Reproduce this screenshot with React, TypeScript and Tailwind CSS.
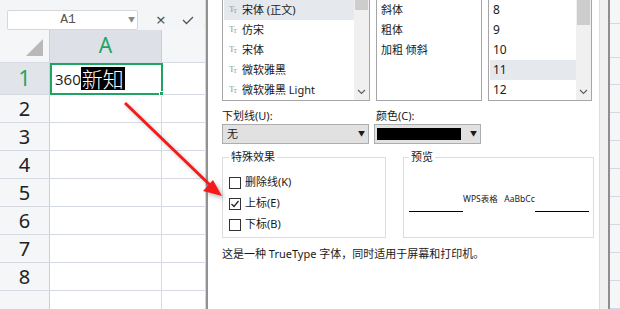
const grid = "border-[#d6dbe3]";

function Chevron() {
  return (
    <svg width="9" height="6" viewBox="0 0 9 6" className="text-[#606060]">
      <polyline points="1,1 4.5,4.5 8,1" fill="none" stroke="currentColor" strokeWidth="1.2" />
    </svg>
  );
}

function TTIcon() {
  return (
    <span className="relative w-[8px] h-[10px] font-['Liberation_Serif',serif] text-[#9a9a9a] leading-none">
      <span className="absolute left-0 top-0 text-[9px]">T</span>
      <span className="absolute left-[4px] top-[3px] text-[7px]">T</span>
    </span>
  );
}

function Scrollbar({ thumb }: { thumb: number }) {
  return (
    <div className="w-[15px] bg-[#f0f0f0] flex flex-col">
      <div className="bg-[#cdcdcd] mx-[1px]" style={{ height: thumb }} />
      <div className="flex-1" />
      <div className="h-[16px] flex items-center justify-center">
        <Chevron />
      </div>
    </div>
  );
}

function CheckRow({ label, checked }: { label: string; checked?: boolean }) {
  return (
    <div className="h-[21px] flex items-center gap-[4px]">
      <div className="w-[12px] h-[12px] border border-[#333] bg-white flex items-center justify-center">
        {checked && (
          <svg width="10" height="10" viewBox="0 0 10 10">
            <polyline points="1.5,5 4,7.5 8.5,2" fill="none" stroke="#222" strokeWidth="1.2" />
          </svg>
        )}
      </div>
      <span>{label}</span>
    </div>
  );
}

export default function App() {
  const fonts = ["宋体 (正文)", "仿宋", "宋体", "微软雅黑", "微软雅黑 Light"];
  const styles = ["斜体", "粗体", "加粗 倾斜"];
  const sizes = ["8", "9", "10", "11", "12"];
  const rows = [2, 3, 4, 5, 6, 7, 8, 9];

  return (
    <div className="relative w-[620px] h-[309px] overflow-hidden flex bg-white font-['Noto_Sans','Noto_Sans_CJK_SC',sans-serif] text-[#1a1a1a]">
      {/* spreadsheet */}
      <div className="w-[205px] flex flex-col shrink-0 overflow-hidden">
        <div className="h-[38px] bg-[#f4f5f6] flex items-start pt-[10px] pl-[7px] gap-[18px] text-[#555]">
          <div className="w-[131px] shrink-0 h-[20px] bg-white border border-[#d7d7d7] rounded-[2px] flex items-center relative">
            <span className="flex-1 text-center font-['Liberation_Mono',monospace] text-[13px]">A1</span>
            <span className="text-[7px] text-[#888] mr-[2px]">▼</span>
          </div>
          <span className="shrink-0 text-[17px] leading-[20px]">×</span>
          <svg width="12" height="20" viewBox="0 0 12 20" className="shrink-0 -ml-[2px]">
            <polyline points="1,10 4.5,13.5 11,7" fill="none" stroke="#555" strokeWidth="1.3" />
          </svg>
          <span className="shrink-0 -ml-[7px] italic font-['Liberation_Serif',serif] text-[14px] leading-[20px] text-[#888]">f</span>
        </div>
        <div className={`h-[33px] flex border-b ${grid}`}>
          <div className="w-[50px] bg-[#f5f6f7] border-r border-[#c9ced6] relative">
            <svg width="50" height="33" className="absolute inset-0">
              <polygon points="43,9 43,26 26,26" fill="#b9b9b9" />
            </svg>
          </div>
          <div className="w-[112px] bg-[#dde1e7] border-r border-[#c9ced6] flex items-center justify-center text-[21px] text-[#1fa463]">
            A
          </div>
          <div className="flex-1 bg-[#f5f6f7]" />
        </div>
        <div className={`h-[34px] flex border-b ${grid}`}>
          <div className="w-[50px] bg-[#e1e4e9] border-r border-[#c9ced6] flex items-center justify-center text-[21px] text-[#1fa463]">
            1
          </div>
          <div className="w-[113px] -mr-[1px] -mb-[1px] border-2 border-[#1fa463] flex items-center pl-[3px] relative z-10">
            <span className="text-[15px] font-['Open_Sans',sans-serif]">360</span>
            <span className="bg-black text-white text-[21px] leading-[22px] h-[23px] px-[1px] font-['Noto_Sans_CJK_SC',sans-serif] font-light">新知</span>
            <div className="absolute -right-[3px] -bottom-[3px] w-[5px] h-[5px] bg-[#1fa463] border border-white" />
          </div>
          <div className="flex-1" />
        </div>
        {rows.map(r => (
          <div key={r} className={`h-[28px] shrink-0 flex border-b ${grid}`}>
            <div className="w-[50px] bg-[#f5f6f7] border-r border-[#c9ced6] flex items-center justify-center text-[20px] text-[#222]">
              {r < 9 ? r : ""}
            </div>
            <div className={`w-[112px] border-r ${grid}`} />
            <div className="flex-1" />
          </div>
        ))}
      </div>
      <div className="w-px bg-[#d8d8d8]" />
      <div className="w-[2px] bg-[#929292]" />

      {/* dialog */}
      <div className="w-[391px] shrink-0 flex flex-col pl-[14px] text-[11px]">
        <div className="h-[101px] flex gap-[6px]">
          <div className="w-[148px] border-x border-b border-[#a6a6a6] flex">
            <div className="flex-1 flex flex-col pl-[1px]">
              {fonts.map((f, i) => (
                <div key={f} className={`h-[20px] flex items-center pl-[5px] gap-[5px] ${i === 0 ? "bg-[#e5e8ed]" : ""}`}>
                  <TTIcon />
                  <span>{f}</span>
                </div>
              ))}
            </div>
            <Scrollbar thumb={10} />
          </div>
          <div className="w-[106px] border-x border-b border-[#a6a6a6] flex flex-col pl-[4px]">
            {styles.map(s => (
              <div key={s} className="h-[20px] flex items-center">{s}</div>
            ))}
          </div>
          <div className="w-[104px] border-x border-b border-[#a6a6a6] flex">
            <div className="flex-1 flex flex-col pl-[1px]">
              {sizes.map(s => (
                <div key={s} className={`h-[20px] flex items-center pl-[3px] text-[12px] ${s === "11" ? "bg-[#e5e8ed]" : ""}`}>
                  {s}
                </div>
              ))}
            </div>
            <Scrollbar thumb={25} />
          </div>
        </div>

        <div className="flex gap-[6px] pt-[7px] leading-[16px]">
          <div className="w-[148px]">下划线(U):</div>
          <div className="w-[106px]">颜色(C):</div>
        </div>
        <div className="flex gap-[6px] h-[20px]">
          <div className="w-[147px] bg-[#e1e1e1] border border-[#adadad] flex items-center pl-[4px] pr-[3px]">
            <span className="flex-1">无</span>
            <span className="text-[7px]">▼</span>
          </div>
          <div className="w-[107px] -ml-[1px] bg-[#e1e1e1] border border-[#adadad] flex items-center pl-[2px] pr-[3px]">
            <div className="w-[84px] h-[12px] bg-black" />
            <span className="flex-1 text-right text-[7px]">▼</span>
          </div>
        </div>

        <div className="flex gap-[17px] mt-[13px] h-[81px]">
          <div className="w-[164px] border border-[#dcdcdc] relative pl-[6px] pt-[14px]">
            <span className="absolute left-[6px] -top-[8px] bg-white px-[2px] leading-[14px]">特殊效果</span>
            <CheckRow label="删除线(K)" />
            <CheckRow label="上标(E)" checked />
            <CheckRow label="下标(B)" />
          </div>
          <div className="w-[191px] border border-[#dcdcdc] relative pl-[5px] pt-[35px]">
            <span className="absolute left-[5px] -top-[8px] bg-white px-[2px] leading-[14px]">预览</span>
            <div className="flex items-end">
              <div className="w-[54px] h-px bg-black" />
              <span className="text-[8.5px] leading-[12px] mb-[7px] whitespace-pre">WPS表格   AaBbCc</span>
              <div className="w-[54px] h-px bg-black" />
            </div>
          </div>
        </div>

        <div className="mt-[8px] leading-[16px]">这是一种 TrueType 字体，同时适用于屏幕和打印机。</div>
      </div>

      {/* right edge */}
      <div className="w-px bg-[#dddddd]" />
      <div className="w-[8px] bg-[#f0f0f0]" />
      <div className="w-[2px] bg-[#8e8e8e]" />
      <div className="flex-1 flex flex-col bg-[#f5f6f7]">
        <div className={`h-[30px] border-b ${grid}`} />
        <div className={`h-[42px] border-b ${grid}`} />
        <div className={`h-[33px] border-b ${grid}`} />
        {rows.map(r => (
          <div key={r} className={`h-[28px] shrink-0 border-b ${grid}`} />
        ))}
      </div>

      {/* red arrow */}
      <svg width="620" height="309" className="absolute inset-0 pointer-events-none">
        <defs>
          <filter id="sh" x="-20%" y="-20%" width="140%" height="140%">
            <feGaussianBlur stdDeviation="2" />
          </filter>
        </defs>
        <g opacity="0.35" filter="url(#sh)" transform="translate(3,3)">
          <line x1="125" y1="103" x2="210" y2="185" stroke="#555" strokeWidth="3" />
          <polygon points="222,196 203,191 213,180" fill="#555" />
        </g>
        <line x1="125" y1="103" x2="210" y2="185" stroke="#f51a1a" strokeWidth="3" />
        <polygon points="222,196 203,191 213,180" fill="#f51a1a" />
      </svg>
    </div>
  );
}
